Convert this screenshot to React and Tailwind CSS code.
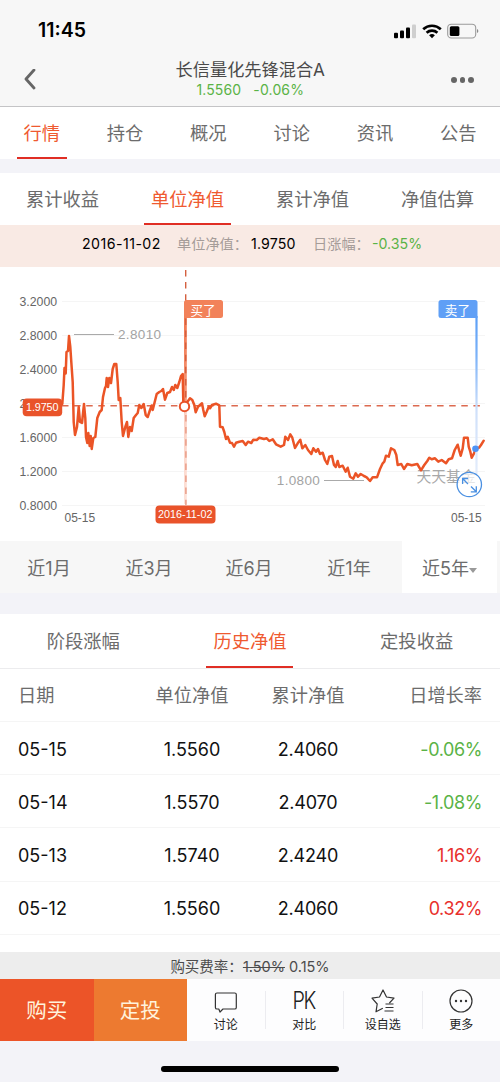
import clsx from 'clsx'

const mainTabs = ['行情', '持仓', '概况', '讨论', '资讯', '公告']
const valueTabs = ['累计收益', '单位净值', '累计净值', '净值估算']
const ranges = ['近1月', '近3月', '近6月', '近1年', '近5年']
const historyTabs = ['阶段涨幅', '历史净值', '定投收益']
const rows = [
  { date: '05-15', unit: '1.5560', total: '2.4060', rate: '-0.06%' },
  { date: '05-14', unit: '1.5570', total: '2.4070', rate: '-1.08%' },
  { date: '05-13', unit: '1.5740', total: '2.4240', rate: '1.16%' },
  { date: '05-12', unit: '1.5560', total: '2.4060', rate: '0.32%' },
]
const axis = [
  { label: '3.2000', y: 301 },
  { label: '2.8000', y: 335 },
  { label: '2.4000', y: 369 },
  { label: '2.0000', y: 403 },
  { label: '1.6000', y: 437 },
  { label: '1.2000', y: 471 },
  { label: '0.8000', y: 505 },
]
const line = `62.3,404 63.7,385 64.5,368 65.7,373.5 66.5,352 68,351 69,336 70.3,347 71.3,362 72.7,382 73.7,422 75,435
77,427 78.7,407 80,422 82,423 84,404 85.3,418 86,437 87.3,443 88.3,433 89.7,446 90.7,436 91.7,449 93.3,438 95.3,437
97.3,418 99.7,412 101.7,410 103,397 105,388 106,386 106.7,378 108,387 109.3,378 111,383 112.7,369 114.3,364 116.3,364
117.7,382 118.7,400 120.3,398 121.7,422 123,436 125.3,427 127,422 128.3,437 130,427 131.7,431 133.7,418 136,415
137.7,413 139.3,405 141.3,408 143.7,404 145.7,415 147.7,417 150,410 151.7,405.5 152.7,410 154.7,402 156.7,394
159.3,392 161.3,391 163,389 165,399.7 167.3,393 170,392 172,387 173.7,390 175.3,385 177.3,388 179.3,382 181,376
182.7,374 183.3,402 185,406 188,401 190,398.3 192.3,400 194.3,405 195.7,412.3 198,406.7 200,405 202,403.3 203.3,410
204.7,416.3 206.7,411.7 208.7,406.7 210,408.3 212,405 216,403.7 219.3,405.3 220,426.7 222.7,427.3 224.3,432 226,439
227.7,436.7 230,442.7 232,443 234,446.7 236,442.7 239.3,441.7 242.7,441 245.7,445 248,441.7 251.3,443 253.3,439.7
256.7,440 259.3,437.7 264,439 266.7,438.3 269.3,441 272.7,439.3 276,444.3 280.7,446.7 284,445 285.3,436.7 288,440
290.3,434.3 292.3,437.7 295,448 297.7,443.3 300.3,439.7 302.3,448.3 305.3,445 308,450 311.3,454 313.3,448.3 316,451.7
318,449 320,454 322.7,452.7 325,460 327.3,464 329.3,456.7 332,456 334,465 335.7,467 337.7,461 339.3,467 342.7,465.7
345.7,471.7 347.7,467.7 350,476.7 353.3,478.7 355.7,473.3 358,476.7 360.7,474 364,476 366.7,477.3 370,481 372.7,477.3
377,477.3 380,469 382.7,463.3 384.3,461.7 386,455.7 388.7,456.7 391,448.3 394.3,450 396.3,455 397.7,465 401.3,464
404,469 407.3,464 411.7,465.3 417.3,464 421,470.3 424.3,465 427.3,461 429.3,457.7 431.7,459.3 435,458.3 438.3,461.7
441.7,460 446,463.3 448.7,459.3 452,458.3 454.7,450 457.7,444.7 459.3,451 460.7,455.7 462.7,448.3 464,437.7
467.7,437.7 468.7,446.7 470.3,451.7 471.7,457.7 474,453.3 475.7,449 479,447.7 481,445 483.7,440.7`

function StatusBar() {
  return (
    <div className="flex h-[53px] items-center justify-between pt-[8px] pl-[38px] pr-[20px]">
      <span className="text-[19.5px] font-semibold text-black">11:45</span>
      <svg width="88" height="18" viewBox="0 0 88 18">
        <rect x="2" y="10.7" width="4" height="5.500" rx="1" />
        <rect x="8" y="8.5" width="4" height="7.7" rx="1" />
        <rect x="14" y="5.5" width="4" height="10.7" rx="1" />
        <rect x="20" y="2.500" width="4" height="13.700" rx="1" fill="#cfcfcf" />
        <g fill="none" stroke="#000" strokeWidth="2.7">
          <path d="M31.2 7.2a13 13 0 0 1 17.6 0" />
          <path d="M34.6 10.8a8 8 0 0 1 10.8 0" />
        </g>
        <path d="M40 16.2l-2.9-3a4.3 4.3 0 0 1 5.8 0z" />
        <rect x="55.7" y="2.2" width="28" height="13.8" rx="3.6" fill="none" stroke="#9b9b9b" strokeWidth="1.1" />
        <rect x="57.8" y="4.3" width="9.6" height="9.6" rx="1.5" />
        <path d="M85 7c1.8.6 1.8 3.4 0 4z" fill="#8a8a8a" />
      </svg>
    </div>
  )
}

function Header() {
  return (
    <div className="flex h-[54px] items-center justify-between border-b border-[#c4c4c6] pl-[23px] pr-[26px]">
      <svg width="14" height="22" viewBox="0 0 14 22" fill="none" stroke="#666" strokeWidth="2.8" strokeLinecap="round" strokeLinejoin="round">
        <path d="M11 1L3 10l8 9" />
      </svg>
      <div className="pl-[12px] pb-[3px] text-center">
        <p className="text-[17.2px] leading-[22px] text-[#4a4a4a]">长信量化先锋混合A</p>
        <p className="text-[14px] leading-[17px] tracking-[0.15px] text-[#5ab346]"><span className="mr-[12px]">1.5560</span>-0.06%</p>
      </div>
      <div className="flex gap-[3px] pt-[1px]">
        {[0, 1, 2].map(i => <i key={i} className="size-[5.5px] rounded-full bg-[#666]" />)}
      </div>
    </div>
  )
}

function Tabs({ items, active, className, bar }) {
  return (
    <div className={clsx('grid bg-white text-[18.3px] text-[#6c6c6c]', className)}>
      {items.map((it, index) => (
        <div key={it} className={clsx('flex flex-col items-center', index == active && 'text-[#ef5a30]')}>
          <span className="flex flex-1 items-center pt-[4px]">{it}</span>
          <i className={clsx('h-[2px]', bar, index == active && 'bg-[#e02e24]')} />
        </div>
      ))}
    </div>
  )
}

function Chart() {
  return (
    <svg className="block" width="500" height="274" viewBox="0 267 500 274" fontFamily="Liberation Sans, Noto Sans CJK SC, sans-serif">
      <defs>
        <linearGradient id="buy" x1="0" y1="0" x2="0" y2="1">
          <stop offset="0" stopColor="#f2784f" />
          <stop offset="0.45" stopColor="#f4997a" />
          <stop offset="0.5" stopColor="#fbd0c2" />
          <stop offset="1" stopColor="#fde3da" />
        </linearGradient>
        <linearGradient id="sell" x1="0" y1="0" x2="0" y2="1">
          <stop offset="0" stopColor="#5a9ef6" />
          <stop offset="0.25" stopColor="#7bb2f8" />
          <stop offset="0.6" stopColor="#cfe0fa" />
          <stop offset="1" stopColor="#e3ecfb" />
        </linearGradient>
      </defs>
      {axis.map(it => (
        <g key={it.label}>
          <path d={`M62 ${it.y + 0.5}H485`} stroke="#f5f5f5" />
          <text x="19.5" y={it.y + 4.6} fontSize="12.3" fill="#666">{it.label}</text>
        </g>
      ))}
      <text x="64.5" y="521.5" fontSize="12" fill="#666">05-15</text>
      <text x="451" y="521.5" fontSize="12" fill="#666">05-15</text>
      <text x="416.5" y="482" fontSize="14.8" fill="#a8a8a8">天天基金</text>
      {/* max and min */}
      <path d="M74 334.5h40M324 480.5h40" stroke="#aaa" strokeWidth="1.2" />
      <text x="118" y="338.8" fontSize="13.5" letterSpacing="0.35" fill="#a3a3a3">2.8010</text>
      <text x="276.8" y="484.7" fontSize="13.5" letterSpacing="0.35" fill="#a3a3a3">1.0800</text>
      {/* crosshair */}
      <rect x="184" y="318" width="2.8" height="186" fill="url(#buy)" />
      <path d="M185.7 270V406" stroke="#d4603f" strokeWidth="1.4" strokeDasharray="6.5 5.6" />
      <path d="M185.9 415V505" stroke="#e89a84" strokeWidth="1.4" strokeDasharray="6.5 5.6" />
      <path d="M62 405.7H480" stroke="#dc6a50" strokeWidth="1.5" strokeDasharray="6.5 5.6" />
      <polyline points={line} fill="none" stroke="#eb5426" strokeWidth="2.5" strokeLinejoin="round" strokeLinecap="round" />
      <circle cx="184.5" cy="406.5" r="4.7" fill="#fff" stroke="#e9532a" strokeWidth="2" />
      <path d="M184 302.5a2.5 2.5 0 0 1 2.5-2.5H220.5a2.5 2.5 0 0 1 2.5 2.5V315.5a2.5 2.5 0 0 1-2.5 2.5H184z" fill="#f2825a" />
      <text x="190.5" y="314.5" fontSize="12.6" fill="#fff">买了</text>
      <rect x="475.4" y="316" width="2.2" height="158" fill="url(#sell)" />
      <circle cx="475.5" cy="448.7" r="3.3" fill="#4e93f5" />
      <path d="M477.5 318H441a2.5 2.5 0 0 1-2.5-2.5V302.5a2.5 2.5 0 0 1 2.5-2.5H475a2.5 2.5 0 0 1 2.5 2.5z" fill="#5f9ff6" />
      <text x="444.8" y="314.5" fontSize="12.6" fill="#fff">卖了</text>
      <rect x="22.7" y="398.5" width="39.5" height="17.7" rx="4" fill="#e9532a" />
      <text x="26" y="411.3" fontSize="10.8" fill="#fff" textLength="32.5">1.9750</text>
      <rect x="155.5" y="505.5" width="60" height="18" rx="4" fill="#e9532a" />
      <text x="158" y="518" fontSize="10.8" fill="#fff" textLength="54.5">2016-11-02</text>
      <g fill="none" stroke="#4a90e2" strokeWidth="1.3">
        <circle cx="469.3" cy="484.5" r="12.2" fill="#fff" fillOpacity="0.7" />
        <path d="M468 484L463 479M462.6 484v-5.5h5.5M471 486.5l4.8 4.8M476.3 486.3v5.5h-5.5" />
      </g>
    </svg>
  )
}

function Action({ label, children }) {
  return (
    <div className="flex flex-1 flex-col items-center gap-[2px] pt-[8px] text-[12px] leading-[18px] text-[#222]">
      <div className="flex h-[27px] items-center justify-center">{children}</div>
      <span>{label}</span>
    </div>
  )
}

export default function App() {
  return (
    <main className="flex h-[1082px] w-[500px] flex-col overflow-hidden bg-[#f3f3f8] font-['Inter','Noto_Sans_CJK_SC',sans-serif]">
      <div className="bg-[#f7f7f7]">
        <StatusBar />
        <Header />
      </div>
      <Tabs items={mainTabs} active={0} className="h-[52px] grid-cols-6" bar="w-[50px]" />
      <Tabs items={valueTabs} active={1} className="mt-[14px] h-[52px] grid-cols-4" bar="w-[87px]" />
      <div className="flex h-[42px] items-center bg-[#f9eae4] pb-[4px] pl-[82px] text-[14.2px] text-black">
        <span className="w-[95px] tracking-[0.45px]">2016-11-02</span>
        <span className="w-[74px] text-[#a59c99]">单位净值：</span>
        <span className="w-[62px] tracking-[0.15px]">1.9750</span>
        <span className="w-[59px] text-[#a59c99]">日涨幅：</span>
        <span className="text-[#5ab346]">-0.35%</span>
      </div>
      <div className="bg-white"><Chart /></div>
      {/* range */}
      <div className="grid h-[52px] grid-cols-5 bg-[#f7f7f7] text-[18px] text-[#6c6c6c]">
        {ranges.map((it, index) => (
          <div key={it} className={clsx('flex items-center justify-center pt-[3px]', index == 4 ? 'ml-[2px] mr-[3px] bg-white' : 'pr-[2px]')}>
            {it}
            {index == 4 && <i className="mt-[3px] border-x-[4px] border-t-[5px] border-x-transparent border-t-[#999]" />}
          </div>
        ))}
      </div>
      <Tabs items={historyTabs} active={1} className="mt-[21px] h-[54px] grid-cols-3" bar="w-[87px]" />
      <table className="w-full table-fixed border-t border-[#ececee] bg-white text-[18px]">
        <thead>
          <tr className="h-[53px] border-b border-[#f5f5f5] text-[18.2px] text-[#6c6c6c]">
            <th className="w-[134px] pt-[2px] pl-[18px] text-left font-normal">日期</th>
            <th className="w-[116px] pt-[2px] font-normal">单位净值</th>
            <th className="w-[116px] pt-[2px] font-normal">累计净值</th>
            <th className="pt-[2px] pr-[18px] text-right font-normal">日增长率</th>
          </tr>
        </thead>
        <tbody>
          {rows.map(it => (
            <tr key={it.date} className="h-[53.2px] border-b border-[#f5f5f5] text-[#111]">
              <td className="pt-[2px] pl-[18px]">{it.date}</td>
              <td className="pt-[2px] text-center">{it.unit}</td>
              <td className="pt-[2px] text-center tracking-[-0.2px]">{it.total}</td>
              <td className={clsx('pt-[2px] pr-[18px] text-right tracking-[-0.4px]', it.rate[0] == '-' ? 'text-[#5ab346]' : 'text-[#e8302c]')}>{it.rate}</td>
            </tr>
          ))}
        </tbody>
      </table>
      <div className="flex-1 bg-white" />
      <div className="flex h-[27px] items-center justify-center bg-[#ededed] pt-[2px] text-[14.5px] text-[#4c4c4c]">
        购买费率：<s className="mr-[4px]">1.50%</s>0.15%
      </div>
      <div className="flex h-[62px] bg-[#fdfdfe]">
        <div className="flex w-[93.5px] items-center justify-center bg-[#ec5428] pt-[2px] text-[20.5px] text-[#fff3dc]">购买</div>
        <div className="flex w-[93.5px] items-center justify-center bg-[#ed7a30] pt-[2px] text-[20.5px] text-[#fff3dc]">定投</div>
        <div className="flex flex-1">
          <Action label="讨论">
            <svg width="24" height="24" viewBox="0 0 24 24" fill="none" stroke="#333" strokeWidth="1.2" strokeLinejoin="round">
              <path d="M3 4H20.700Q22.300 4 22.300 5.600V18.400Q22.300 20 20.700 20H9L6 23 4.800 20H3Q1.400 20 1.400 18.400V5.600Q1.400 4 3 4Z" />
            </svg>
          </Action>
          <i className="my-[12px] w-px bg-[#ececf0]" />
          <Action label="对比">
            <span className="scale-x-[0.82] text-[24px] font-light tracking-[-1.5px]">PK</span>
          </Action>
          <i className="my-[12px] w-px bg-[#ececf0]" />
          <Action label="设自选">
            <svg width="24" height="24" viewBox="0 0 24 24" fill="none" stroke="#333" strokeWidth="1.2" strokeLinejoin="round">
              <path d="M11.800 19.200L5 22.800 6.200 15 1 9.200 8.500 8 12 1l3.500 7 7.500 1.200-4.600 4.800M14.500 15h8M14.500 18.500h8M13.500 22h9" />
            </svg>
          </Action>
          <i className="my-[12px] w-px bg-[#ececf0]" />
          <Action label="更多">
            <svg width="24" height="24" viewBox="0 0 24 24" fill="none" stroke="#333" strokeWidth="1.2">
              <circle cx="12" cy="12" r="11" />
              <g fill="#333" stroke="none">
                <circle cx="7" cy="12" r="1.2" />
                <circle cx="12" cy="12" r="1.2" />
                <circle cx="17" cy="12" r="1.2" />
              </g>
            </svg>
          </Action>
        </div>
      </div>
      <div className="flex h-[41px] justify-center pt-[25px]">
        <div className="h-[6px] w-[178px] rounded-full bg-black" />
      </div>
    </main>
  )
}
